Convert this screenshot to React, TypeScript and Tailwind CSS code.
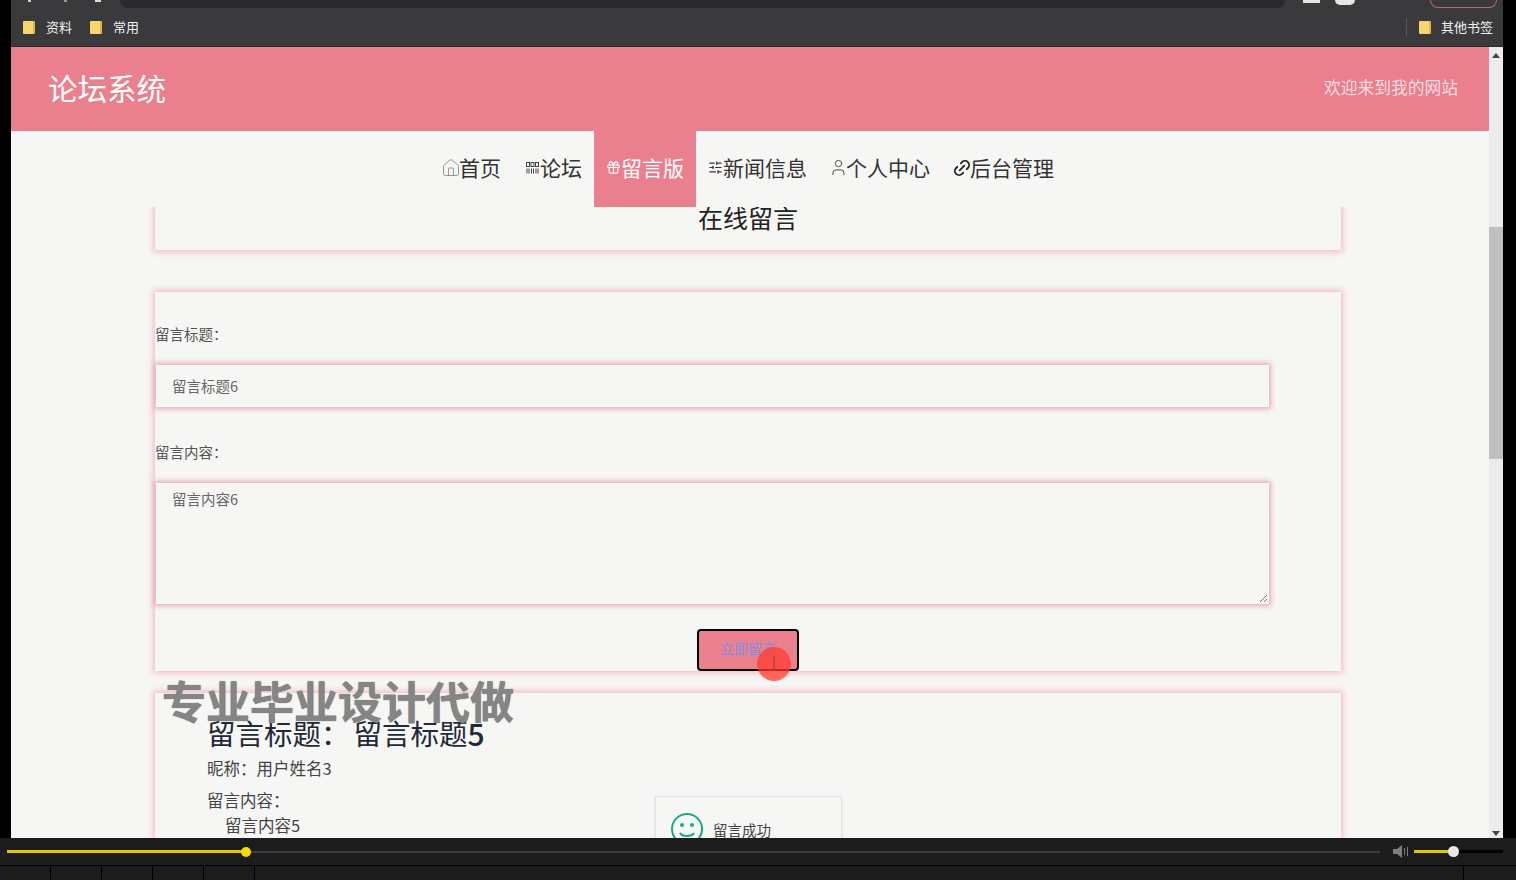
import { Home, Gift, SlidersHorizontal, User, Link2 } from "lucide-react";

const font = { fontFamily: '"Noto Sans CJK SC", "Liberation Sans", sans-serif' };

function Folder() {
  return <span className="w-[12px] h-[13px] bg-[#f5d76e] rounded-[1px] border-r-2 border-[#d9b94e]" />;
}

function GridIcon() {
  return (
    <svg width="15" height="15" viewBox="0 0 15 15" fill="none" stroke="#444" strokeWidth="1">
      <rect x="1.5" y="2.5" width="3" height="4" />
      <rect x="6" y="2.5" width="3" height="4" />
      <rect x="10.5" y="2.5" width="3" height="4" />
      <path d="M2 8.5v5M4 8.5v5M6.5 8.5v5M8.5 8.5v5M11 8.5v5M13 8.5v5" />
    </svg>
  );
}

const navItems = [
  { label: "首页", icon: <Home size={20} strokeWidth={0.9} color="#777" className="-mx-[2px]" /> },
  { label: "论坛", icon: <GridIcon /> },
  { label: "留言版", icon: <Gift size={15} strokeWidth={1.8} color="#fff" />, active: true },
  { label: "新闻信息", icon: <SlidersHorizontal size={15} strokeWidth={1.8} color="#333" /> },
  { label: "个人中心", icon: <User size={19} strokeWidth={1.2} color="#444" className="-mx-[2px]" /> },
  { label: "后台管理", icon: <Link2 size={20} strokeWidth={2.2} color="#222" className="-rotate-45 -mx-[2px]" /> },
];

const cardClass = "bg-[#f6f6f4] shadow-[0_0_6px_2px_#f2bcc4] ml-[144px] mr-[148px]";
const fieldClass = "bg-[#f6f6f4] shadow-[0_0_5px_2px_#e9aab4,inset_0_0_0_1px_#fdfdfc] ml-px w-[1113px] pl-4 text-[14.5px] text-[#666]";

export default function App() {
  return (
    <div className="relative w-[1516px] h-[880px] overflow-hidden bg-black flex flex-col" style={font}>
      <div className="flex h-[838px]">
        <div className="w-[11px] shrink-0" />
        <div className="w-[1492px] flex flex-col">
          {/* browser chrome */}
          <div className="h-[47px] shrink-0 bg-[#3a3a3c] flex flex-col border-b border-[#2b2b2b]">
            <div className="h-[9px] flex items-start">
              <div className="ml-[17px] w-[3px] h-[2px] bg-[#cfcfcf]" />
              <div className="ml-[33px] w-[3px] h-[2px] bg-[#9a9a9a]" />
              <div className="ml-[28px] w-[6px] h-[2px] bg-[#dcdcdc]" />
              <div className="ml-[19px] w-[1165px] h-[8px] bg-[#2a2a2c] rounded-b-lg" />
              <div className="ml-[18px] w-[17px] h-[3px] bg-[#e6e6e6]" />
              <div className="ml-[15px] w-[20px] h-[5px] bg-[#e6e6e6] rounded-b-full" />
              <div className="ml-[75px] w-[67px] h-[8px] border border-t-0 border-[#b46a68] rounded-b-xl" />
            </div>
            <div className="flex-1 flex items-center text-[13px] text-[#f0f0f0] pl-[12px] pr-[10px] pb-[1px]">
              <Folder />
              <span className="ml-[11px] w-[44px]">资料</span>
              <Folder />
              <span className="ml-[11px]">常用</span>
              <div className="ml-auto w-px h-[18px] bg-[#5a5a5a] mr-[12px]" />
              <Folder />
              <span className="ml-[10px]">其他书签</span>
            </div>
          </div>
          <div className="flex-1 flex min-h-0">
            {/* page */}
            <div className="w-[1478px] bg-[#f6f6f4] flex flex-col overflow-hidden">
              <div className="h-[84px] shrink-0 bg-[#ea7f8e] flex items-center justify-between pl-[37px] pr-[31px] pb-[3px]">
                <span className="text-[29.5px] text-white">论坛系统</span>
                <span className="text-[16.75px] text-[#fbdde1]">欢迎来到我的网站</span>
              </div>
              <div className="h-[76px] shrink-0 flex justify-center pr-[3px] relative z-10 bg-[#f6f6f4]">
                {navItems.map((n) => (
                  <div
                    key={n.label}
                    className={`flex items-center px-[12px] pb-[3px] text-[21px] ${n.active ? "bg-[#ea7f8e] text-white" : "text-[#333]"}`}
                  >
                    {n.icon}
                    <span>{n.label}</span>
                  </div>
                ))}
              </div>
              <div className={`${cardClass} h-[43px] text-center text-[25px] leading-[20px] text-[#222] shrink-0`}>在线留言</div>
              <div className={`${cardClass} h-[379px] mt-[42px] shrink-0 flex flex-col`}>
                <div className="text-[14.5px] text-[#555] mt-[31px] leading-[22px]">留言标题：</div>
                <div className={`${fieldClass} h-[42px] mt-[20px] flex items-center`}>留言标题6</div>
                <div className="text-[14.5px] text-[#555] mt-[34px] leading-[22px]">留言内容：</div>
                <div className={`${fieldClass} relative h-[121px] mt-[20px] pt-[6px] leading-[20px]`}>
                  留言内容6
                  <svg className="absolute right-[1px] bottom-[1px]" width="9" height="9" viewBox="0 0 9 9" stroke="#777" strokeWidth="1">
                    <path d="M1 8L8 1M5 8L8 5" />
                  </svg>
                </div>
                <div className="self-center mt-[25px] w-[102px] h-[42px] pb-[3px] bg-[#ea7f8e] border-2 border-black rounded-[4px] flex items-center justify-center text-[14px] text-[#7f8fe6]">
                  立即留言
                </div>
              </div>
              <div className={`${cardClass} mt-[22px] flex-1 pl-[52px] pt-[20px]`}>
                <div className="text-[28.5px] leading-[40px] text-[#1f2937] flex items-center">
                  <span>留言标题：</span>
                  <span className="w-[4px]" />
                  <span>留言标题</span>
                  <span className="text-[30px] font-medium">5</span>
                </div>
                <div className="text-[16.5px] leading-[24px] text-[#444] mt-[3px]">昵称：用户姓名3</div>
                <div className="text-[16.5px] leading-[24px] text-[#444] mt-[8px]">留言内容：</div>
                <div className="text-[16.5px] leading-[24px] text-[#444] ml-[18px] mt-px">留言内容5</div>
              </div>
            </div>
            {/* scrollbar */}
            <div className="w-[14px] bg-[#ececec] flex flex-col items-center">
              <div className="mt-[6px] w-0 h-0 border-x-[4px] border-x-transparent border-b-[5px] border-b-[#444]" />
              <div className="mt-[169px] w-full h-[232px] bg-[#bfbfbf]" />
              <div className="mt-auto mb-[2px] w-0 h-0 border-x-[4px] border-x-transparent border-t-[5px] border-t-[#444]" />
            </div>
          </div>
        </div>
        <div className="flex-1" />
      </div>

      {/* player */}
      <div className="relative z-20 h-[42px] bg-[#1c1c1c] flex flex-col">
        <div className="h-[27px] flex items-center pl-[7px]">
          <div className="w-[239px] h-[3px] bg-[#e0c600]" />
          <div className="w-[10px] h-[10px] rounded-full bg-[#f7dc00] -ml-[5px] -mr-[5px] z-10" />
          <div className="w-[1134px] h-[2px] bg-[#3a3a3a]" />
          <svg className="ml-[12px]" width="17" height="17" viewBox="0 0 17 17" fill="#7e7e7e">
            <path d="M1 6h4l5-4v13l-5-4H1z" />
            <rect x="12" y="5" width="1" height="7" />
            <rect x="15" y="4" width="1" height="9" />
          </svg>
          <div className="ml-[5px] w-[39px] h-[3px] bg-[#e0c600]" />
          <div className="w-[11px] h-[11px] rounded-full bg-[#e8e8e8] -mx-[5px] z-10" />
          <div className="w-[49px] h-[3px] bg-black" />
        </div>
        <div className="flex-1 flex border-t border-black">
          {[0, 1, 2, 3, 4].map((i) => (
            <div key={i} className="w-[51px] border-r border-black" />
          ))}
          <div className="w-[1209px] border-r border-black" />
        </div>
      </div>

      {/* overlays */}
      <div className="absolute left-[162px] top-[670px] text-[44px] leading-[60px] font-bold text-[#858585] [text-shadow:0_0_1px_#555]">
        专业毕业设计代做
      </div>
      <div className="absolute left-[655px] top-[796px] w-[187px] h-[60px] bg-[#f6f6f4] border border-[#e2e2e2] shadow-sm flex items-start pl-[15px] pt-[16px]">
        <svg width="32" height="32" viewBox="0 0 32 32" fill="none" stroke="#1aa88a" strokeWidth="2">
          <circle cx="16" cy="16" r="15" />
          <circle cx="11" cy="12" r="2" fill="#1aa88a" stroke="none" />
          <circle cx="21" cy="12" r="2" fill="#1aa88a" stroke="none" />
          <path d="M9 20c2 4 12 4 14 0" />
        </svg>
        <span className="ml-[10px] text-[14.5px] leading-[34px] text-[#444]">留言成功</span>
      </div>
      <div className="absolute left-[757px] top-[647px] w-[34px] h-[34px] rounded-full bg-[#ff3b30]/75 flex justify-center">
        <svg className="mt-[8px]" width="10" height="18" viewBox="0 0 10 18" fill="none" stroke="#a33a30" strokeWidth="1">
          <path d="M5 1v13l-3 2M5 14l3 2" />
        </svg>
      </div>
    </div>
  );
}
